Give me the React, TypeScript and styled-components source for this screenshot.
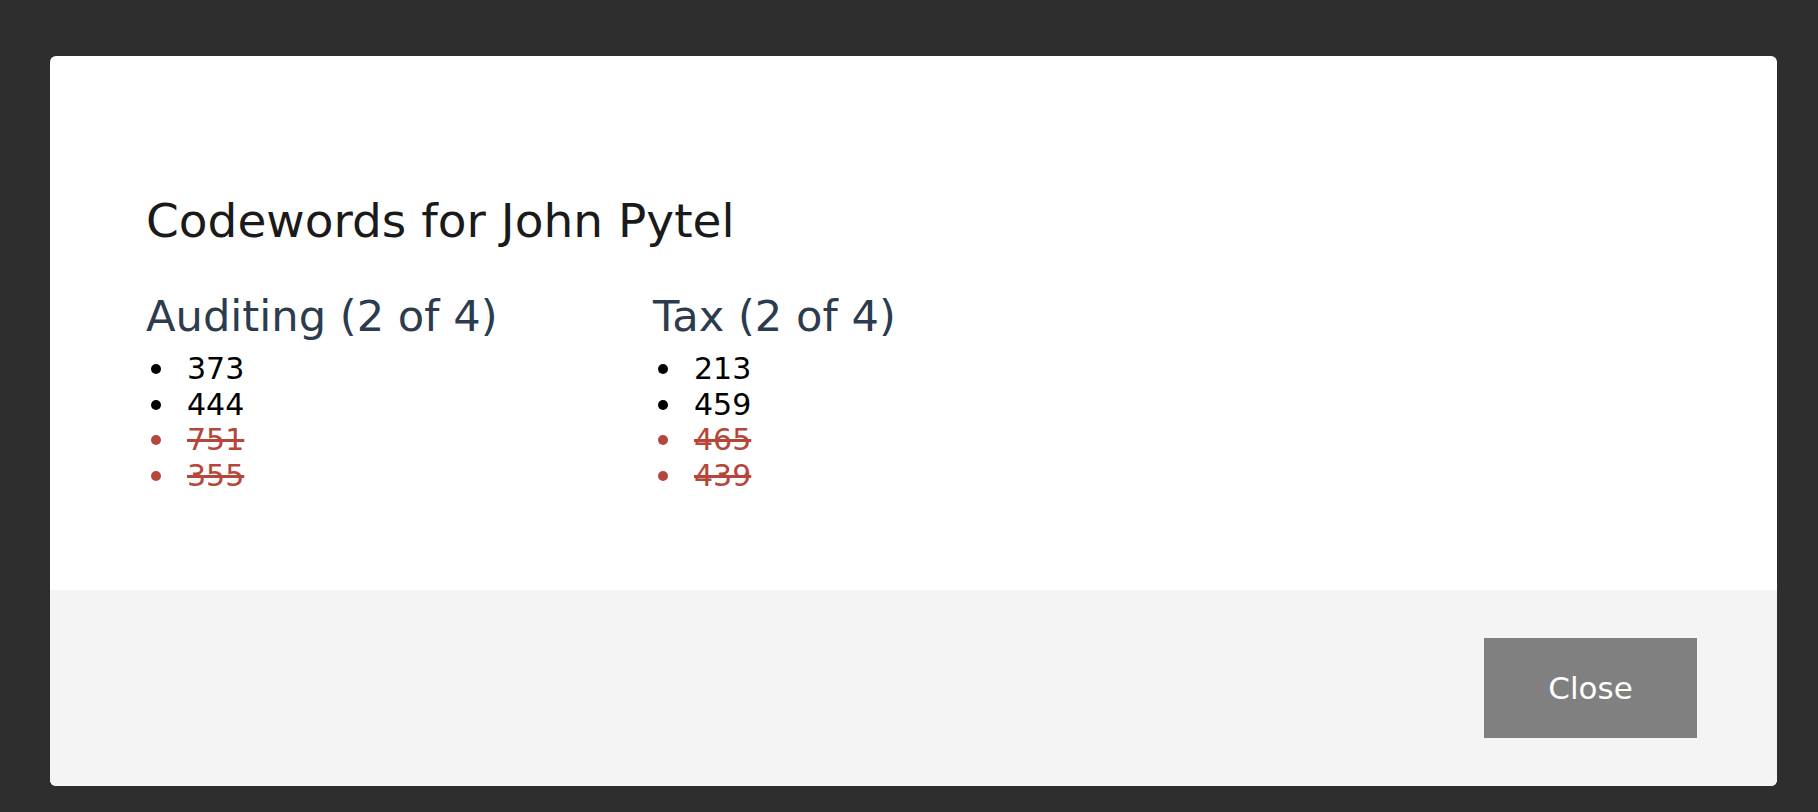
import React from 'react'
import styled, { createGlobalStyle } from 'styled-components'

const GlobalStyle = createGlobalStyle`
    html, body {
        margin: 0;
        padding: 0;
        background: #2e2e2e;
        font-family: "DejaVu Sans", Verdana, sans-serif;
    }
`

const Backdrop = styled.div`
    height: 812px;
    box-sizing: border-box;
    padding: 56px 41px 0 50px;
    display: flex;
    align-items: flex-start;
`

const Modal = styled.div`
    width: 1727px;
    height: 730px;
    background: #fff;
    border-radius: 6px;
    overflow: hidden;
    display: flex;
    flex-direction: column;
`

const Body = styled.div`
    flex: 1;
    padding: 137px 96px 0;
`

const Title = styled.h1`
    margin: 0;
    font-size: 47px;
    line-height: 56px;
    font-weight: normal;
    color: #1a1a1a;
`

const Columns = styled.div`
    display: flex;
    margin-top: 42px;
`

const Column = styled.section`
    width: 507px;
`

const GroupTitle = styled.h2`
    margin: 0;
    font-size: 43.2px;
    line-height: 50px;
    font-weight: normal;
    color: #2c3b4e;
`

const Codes = styled.ul`
    list-style: none;
    margin: 10px 0 0;
    padding: 0;
`

const Code = styled.li<{ $used?: boolean }>`
    display: flex;
    align-items: center;
    font-size: 30px;
    line-height: 35.7px;
    color: ${p => (p.$used ? '#b5473a' : '#000')};
    text-decoration: ${p => (p.$used ? 'line-through' : 'none')};

    &::before {
        content: '';
        width: 10px;
        height: 10px;
        border-radius: 50%;
        background: currentColor;
        margin: 0 26px 0 5px;
    }
`

const Footer = styled.div`
    height: 196px;
    box-sizing: border-box;
    background: #f4f4f4;
    padding: 48px 80px;
    display: flex;
    justify-content: flex-end;
`

const CloseButton = styled.button`
    width: 213px;
    height: 100px;
    border: none;
    border-radius: 0;
    background: #808080;
    color: #fff;
    font-family: "DejaVu Sans", Verdana, sans-serif;
    font-size: 31px;
    cursor: pointer;
`

const groups = [
    { name: 'Auditing', total: 4, codes: [{ n: '373' }, { n: '444' }, { n: '751', used: true }, { n: '355', used: true }] },
    { name: 'Tax', total: 4, codes: [{ n: '213' }, { n: '459' }, { n: '465', used: true }, { n: '439', used: true }] },
]

export default function App() {
    return (
        <>
            <GlobalStyle />
            <Backdrop>
                <Modal>
                    <Body>
                        <Title>Codewords for John Pytel</Title>
                        <Columns>
                            {groups.map(g => {
                                const left = g.codes.filter(c => !c.used).length
                                return (
                                    <Column key={g.name}>
                                        <GroupTitle>{g.name} ({left} of {g.total})</GroupTitle>
                                        <Codes>
                                            {g.codes.map(c => (
                                                <Code key={c.n} $used={c.used}>{c.n}</Code>
                                            ))}
                                        </Codes>
                                    </Column>
                                )
                            })}
                        </Columns>
                    </Body>
                    <Footer>
                        <CloseButton>Close</CloseButton>
                    </Footer>
                </Modal>
            </Backdrop>
        </>
    )
}
